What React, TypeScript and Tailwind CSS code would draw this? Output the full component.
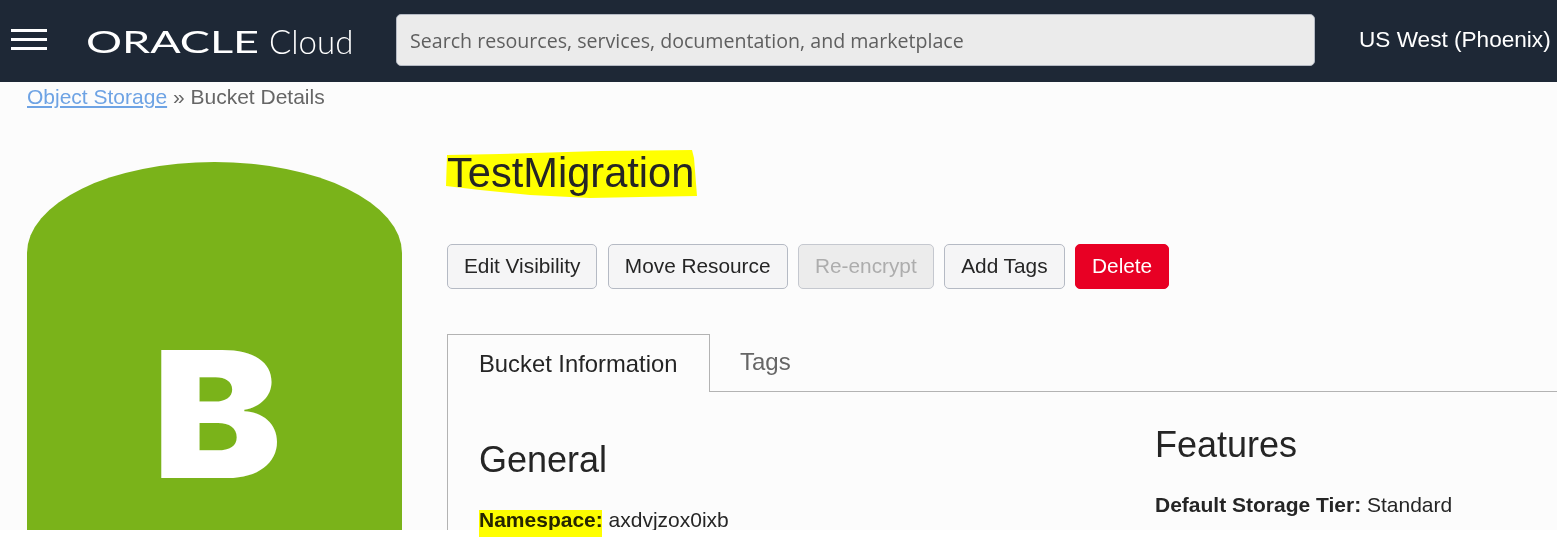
const sans = "font-['Liberation_Sans',Arial,sans-serif]";

function GreenBucket() {
  return (
    <div className="relative ml-[27px] mt-[50px] h-[375px] w-[375px] shrink-0 overflow-hidden rounded-t-[187.5px_91px] bg-[#7ab31a]">
      <span className="absolute left-[5px] right-0 top-[164px] scale-x-110 text-center font-['Inter',sans-serif] text-[176px] font-black leading-[176px] text-white">
        B
      </span>
    </div>
  );
}

function ActionButton({ label, disabled, danger }: { label: string; disabled?: boolean; danger?: boolean }) {
  let look = "border-[#b5bac4] bg-[#f5f5f6] text-[#252525]";
  if (disabled) look = "border-[#c5c8cf] bg-[#ececec] text-[#adadad]";
  if (danger) look = "border-[#e80024] bg-[#e80024] text-white";
  return (
    <button className={`h-[45px] rounded-[5px] border px-4 pb-[2px] text-[20.8px] ${look}`}>
      {label}
    </button>
  );
}

export default function App() {
  return (
    <div className={`relative h-[537px] w-[1557px] overflow-hidden bg-white ${sans}`}>
      {/* Top bar */}
      <header className="flex h-[82px] items-center bg-[#1e2836]">
        <div className="mb-[3px] ml-[11px] flex w-[36px] flex-col gap-[6px]">
          <div className="h-[3px] bg-white" />
          <div className="h-[3px] bg-white" />
          <div className="h-[3px] bg-white" />
        </div>
        <div className="ml-[39px] flex w-[310px] items-center text-white">
          <span className="w-[173px] origin-left scale-x-[1.5] font-['Lato',sans-serif] text-[30px] leading-none font-normal">
            ORACLE
          </span>
          <span className="ml-[10px] font-['Lato',sans-serif] text-[33px] leading-none font-light">Cloud</span>
        </div>
        <div className="mb-[2px] flex h-[52px] w-[919px] items-center rounded-[5px] border border-[#b5bac4] bg-[#ebebeb] pl-[13px] pt-[2px] font-['Open_Sans',sans-serif] text-[19.6px] text-[#5f5f5f]">
          Search resources, services, documentation, and marketplace
        </div>
        <span className="ml-[44px] -translate-y-[1px] whitespace-nowrap text-[22.6px] text-white">US West (Phoenix)</span>
      </header>

      {/* Page body */}
      <div className="h-[448px] overflow-hidden bg-[#fcfcfc]">
        <div className="pl-[27px] text-[21px] leading-[30px] text-[#666666]">
          <a className="text-[#6ea3e4] underline">Object Storage</a> » Bucket Details
        </div>
        <div className="flex">
          <GreenBucket />
          <div className="ml-[45px] flex-1">
            <h1 className="mt-[37px] text-[41.6px] leading-[48px] text-[#252525]">
              <span className="relative">
                <svg className="absolute left-[-3px] top-[-2px]" width="256" height="54" viewBox="0 0 256 54">
                  <path d="M3 8 L56 7 L156 4 L248 3 L250 11 L253 49 L196 50 L146 51 L86 48 L36 43 L2 39 Z" fill="#ffff00" />
                </svg>
                <span className="relative">TestMigration</span>
              </span>
            </h1>
            <div className="mt-[47px] flex gap-[10.5px]">
              <ActionButton label="Edit Visibility" />
              <ActionButton label="Move Resource" />
              <ActionButton label="Re-encrypt" disabled />
              <ActionButton label="Add Tags" />
              <ActionButton label="Delete" danger />
            </div>
            <div className="mt-[45px] flex h-[58px] items-stretch">
              <div className="flex w-[263px] items-center border border-b-0 border-[#b3b3b3] pl-[31px] text-[23.8px] text-[#252525]">
                Bucket Information
              </div>
              <div className="flex-1 border-b border-[#b3b3b3] pl-[30px] pt-[10px] text-[24px] text-[#666666]">Tags</div>
            </div>
            <div className="flex border-l border-[#b3b3b3] pl-[31px]">
              <div className="w-[676px]">
                <h2 className="mt-[44px] text-[36px] leading-[48px] text-[#252525]">General</h2>
                <p className="mt-[21px] text-[21px] leading-[30px] text-[#252525]">
                  <b className="font-bold">Namespace:</b> axdvjzox0ixb
                </p>
              </div>
              <div>
                <h2 className="mt-[29px] text-[36px] leading-[48px] text-[#252525]">Features</h2>
                <p className="mt-[21px] text-[21px] leading-[30px] text-[#252525]">
                  <b className="font-bold">Default Storage Tier:</b> Standard
                </p>
              </div>
            </div>
          </div>
        </div>
      </div>

      {/* Highlight marker drawn over the screenshot */}
      <span className="absolute left-[479px] top-[510px] h-[27px] w-[123px] bg-[#ffff00] mix-blend-multiply" />
    </div>
  );
}
